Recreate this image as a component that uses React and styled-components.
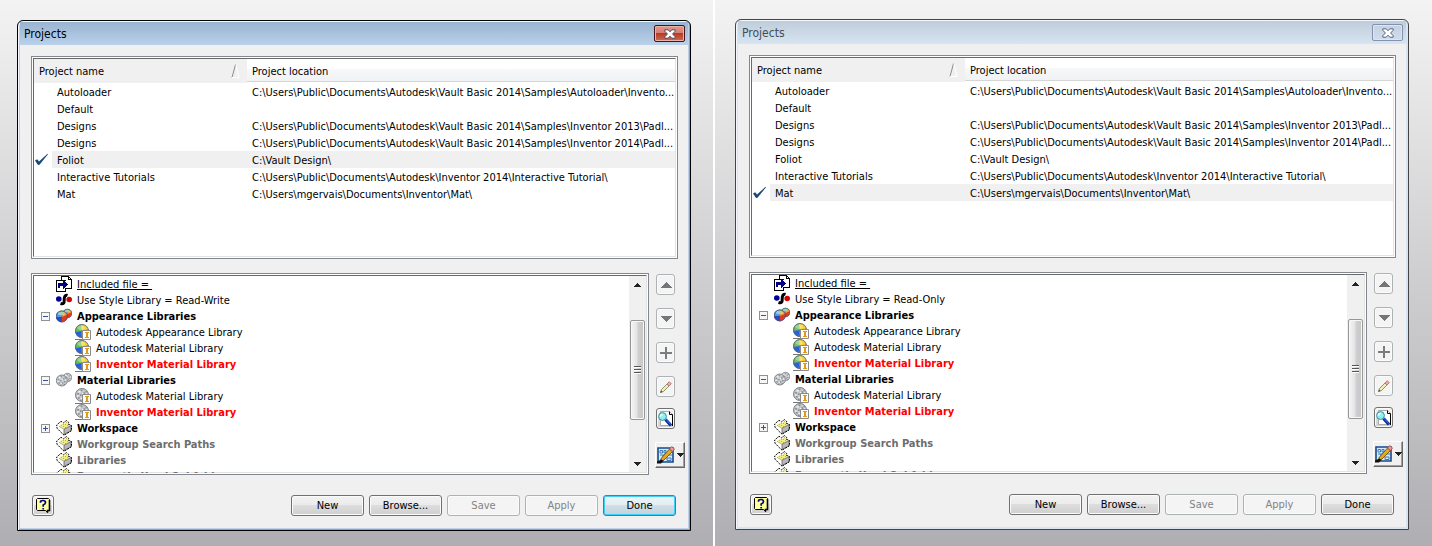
import React from 'react';
import styled, { createGlobalStyle, css } from 'styled-components';

const GlobalStyle = createGlobalStyle`
  * {
    box-sizing: border-box;
  }

  body {
    margin: 0;
    font-family: "DejaVu Sans Condensed", Tahoma, sans-serif;
    font-size: 11px;
    line-height: 16px;
    color: #000;
  }

  button {
    font: inherit;
    color: inherit;
    padding: 0;
  }

  svg {
    display: block;
  }
`;

// Data
const paths = [
  { name: 'Autoloader', location: 'C:\\Users\\Public\\Documents\\Autodesk\\Vault Basic 2014\\Samples\\Autoloader\\Invento...' },
  { name: 'Default', location: '' },
  { name: 'Designs', location: 'C:\\Users\\Public\\Documents\\Autodesk\\Vault Basic 2014\\Samples\\Inventor 2013\\Padl...' },
  { name: 'Designs', location: 'C:\\Users\\Public\\Documents\\Autodesk\\Vault Basic 2014\\Samples\\Inventor 2014\\Padl...' },
  { name: 'Foliot', location: 'C:\\Vault Design\\' },
  { name: 'Interactive Tutorials', location: 'C:\\Users\\Public\\Documents\\Autodesk\\Inventor 2014\\Interactive Tutorial\\' },
  { name: 'Mat', location: 'C:\\Users\\mgervais\\Documents\\Inventor\\Mat\\' },
];

const getTree = mode => [
  { icon: 'file', label: 'Included file = ', underline: true },
  { icon: 'style', label: `Use Style Library = ${mode}` },
  { icon: 'appearance', label: 'Appearance Libraries', bold: true, toggle: 'minus' },
  { icon: 'appearanceItem', label: 'Autodesk Appearance Library', child: true },
  { icon: 'appearanceItem', label: 'Autodesk Material Library', child: true },
  { icon: 'appearanceItem', label: 'Inventor Material Library', child: true, bold: true, color: '#ff0000' },
  { icon: 'material', label: 'Material Libraries', bold: true, toggle: 'minus' },
  { icon: 'materialItem', label: 'Autodesk Material Library', child: true },
  { icon: 'materialItem', label: 'Inventor Material Library', child: true, bold: true, color: '#ff0000' },
  { icon: 'box', label: 'Workspace', bold: true, toggle: 'plus' },
  { icon: 'box', label: 'Workgroup Search Paths', bold: true, color: '#6d6d6d' },
  { icon: 'box', label: 'Libraries', bold: true, color: '#6d6d6d' },
  { icon: 'box', label: 'Frequently Used Subfolders', bold: true, color: '#6d6d6d' },
];

// Icons
const FileIcon = () => (
  <svg width="16" height="16" viewBox="0 0 16 16" shapeRendering="crispEdges">
    <path d="M5.500 .5h7l3 3v9h-10z" fill="#fff" stroke="#000" />
    <path d="M12.500 .5v3h3" fill="none" stroke="#000" />
    <path d="M.5 4.500h9v11h-9z" fill="#fff" stroke="#000" />
    <path d="M9 5h2v7H9z" fill="#fff" />
    <path d="M2 7h5V4h1v1h1v1h1v1h1v1h1v1h-1v1h-1v1H9v1H8v1H7v-3H4v2H2z" fill="#000080" />
  </svg>
);

const StyleIcon = () => (
  <svg width="16" height="16" viewBox="0 0 16 16">
    <circle cx="2.800" cy="7" r="2.800" fill="#000099" />
    <circle cx="13.200" cy="7.500" r="2.800" fill="#d40000" />
    <path d="M4.500 11.500c3 1 3.800-.5 3.700-3.500s.8-5.500 3.300-4.500" fill="none" stroke="#000" strokeWidth="3" />
  </svg>
);

const Ball = ({ x, y, r, grey }) => (
  <g transform={`translate(${x} ${y}) scale(${r})`}>
    {grey ? (
      <>
        <circle r="1" fill="#c6c8cb" />
        <path d="M-.7-.3h.25v.25h-.25zM-.2-.8h.25v.25h-.25zM.2-.4h.25v.25H.2zM-.3-.1h.25v.25h-.25zM.4.1h.25v.25H.4zM-.6.3h.25v.25h-.25zM0 .3h.25v.25H0zM.3.6h.25v.2H.3zM-.3.7h.25v.2h-.25zM.5-.6h.2v.25H.5z" fill="#8d9299" />
        <path d="M-.5-.6h.3v.25h-.3zM0-.3h.2v.25H0zM.6-.25h.2v.25H.6zM-.75.05h.25v.2h-.25zM-.2.4H0v.2h-.2z" fill="#f4f4f4" />
      </>
    ) : (
      <>
        <circle r="1" fill="#f6d22c" />
        <path d="M0 0-.2-1A1 1 0 0 0-.98.1z" fill="#6cc050" />
        <path d="M0 0-.98.1A1 1 0 0 0-.2.98z" fill="#2464d8" />
        <path d="M0 0-.2.98A1 1 0 0 0 .8.6z" fill="#b33bb0" />
        <path d="M0 0 .8.600A1 1 0 0 0 .95-.3z" fill="#f7922a" />
        <ellipse cx="-.15" cy="-.5" rx=".55" ry=".35" fill="#fff" opacity=".35" />
      </>
    )}
    <circle r=".95" fill="none" stroke={grey ? '#777b80' : '#54688c'} strokeWidth=".14" />
  </g>
);

const SphereBall = ({ x, y, r }) => (
  <g transform={`translate(${x} ${y}) scale(${r})`}>
    <circle r="1" fill="#e03a24" />
    <path d="M0 .1-.3-1A1 1 0 0 0-1 .1z" fill="#4a9ae0" />
    <path d="M0 .1-1 .1A1 1 0 0 0 0 1z" fill="#2849c8" />
    <path d="M0 .1-.3-1A1 1 0 0 1 .5-.85z" fill="#5cb844" />
    <path d="M0 .1.500-.85A1 1 0 0 1 .95-.3z" fill="#f8a028" />
    <ellipse cx="-.1" cy="-.55" rx=".6" ry=".35" fill="#fff" opacity=".45" />
    <circle r=".95" fill="none" stroke="#3f548a" strokeWidth=".14" />
  </g>
);

const AppearanceIcon = () => (
  <svg width="16" height="16" viewBox="0 0 16 16">
    <SphereBall x={11.500} y={5.500} r={4.500} />
    <SphereBall x={5.800} y={8.500} r={5.800} />
  </svg>
);

const MaterialIcon = () => (
  <svg width="16" height="16" viewBox="0 0 16 16">
    <Ball x={11.500} y={5.500} r={4.500} grey />
    <Ball x={5.800} y={8.500} r={5.800} grey />
  </svg>
);

const LibraryItemIcon = ({ grey }) => (
  <svg width="16" height="16" viewBox="0 0 16 16">
    <Ball x={7} y={7} r={6.800} grey={grey} />
    <path d="M0 15.500h8" stroke="#777" />
    <path d="M7.500 6.500h8v9h-8z" fill="#fffdf5" stroke="#8a8a8a" />
    <path d="M10 8h4v1h-1v4h1v1h-4v-1h1V9h-1z" fill="#e09a1c" shapeRendering="crispEdges" />
  </svg>
);

const BoxIcon = () => (
  <svg width="16" height="16" viewBox="0 0 16 16">
    <path d="M1 5 5 1.500 7.500 3 10.500.800 12.500 2.500 11.500 4 15.300 5.500V10.500L8 15 4.500 11.500 1 8z" fill="#fffffa" />
    <path d="M3.500 5.500 6 3.800 7.500 4.500 10.500 2 12 3.500 11.500 4.500 14 5.500 8 8.800z" fill="#f4ee78" />
    <path d="M5 5h1v1H5zM7 6h1v1H7zM9 4h1v1H9zM11 5h1v1h-1zM9 7h1v1H9zM7 4h1v1H7zM10 2h1v1h-1z" fill="#c0b83c" />
    <path d="M8 9.200 15 5.500v5L8 14.700z" fill="#b8b8b8" stroke="#555" strokeWidth=".7" />
    <path d="M3 6.200 8 9.200" fill="none" stroke="#8a8a8a" strokeWidth=".7" />
    <path
      d="M8 15.200 4.500 11.800 1 8.200.7 5 5 1.300 7.500 2.800 10.500.600 12.700 2.500 12 4 15.500 5.500V10.700z"
      fill="none"
      stroke="#000"
      strokeWidth="1"
      strokeDasharray="2 1"
    />
  </svg>
);

const icons = {
  file: <FileIcon />,
  style: <StyleIcon />,
  appearance: <AppearanceIcon />,
  appearanceItem: <LibraryItemIcon />,
  material: <MaterialIcon />,
  materialItem: <LibraryItemIcon grey />,
  box: <BoxIcon />,
};

const CheckIcon = () => (
  <svg width="14" height="13" viewBox="0 0 14 13" role="img" aria-label="Active project">
    <path d="M0 7.500 2.200 6.200 4 8.500 12.500.800 13 1.200 4.500 11.800 3 12z" fill="#1b4878" />
  </svg>
);

const SortIcon = () => (
  <svg width="9" height="14" viewBox="0 0 9 14">
    <path d="M1 13.500 4.500.500" fill="none" stroke="#8c8c8c" />
    <path d="M5 .500 8 13.500H1" fill="none" stroke="#fff" />
  </svg>
);

const ToggleIcon = ({ plus }) => (
  <svg width="9" height="9" viewBox="0 0 9 9" shapeRendering="crispEdges">
    <path d="M.5.500h8v8h-8z" fill="#f6f6f6" stroke="#919191" />
    <path d={plus ? 'M2 4.500h5M4.500 2v5' : 'M2 4.500h5'} stroke="#3f4f9c" />
  </svg>
);

const CloseIcon = ({ active }) => (
  <svg width="12" height="10" viewBox="0 0 12 10">
    <path
      d="M.8.800h3.400L6 2.800 7.800.800h3.400v1.400L8.600 5l2.600 2.800v1.400H7.800L6 7.200 4.200 9.200H.8V7.800L3.400 5 .8 2.200z"
      fill="#fff"
      stroke={active ? '#4d4a5c' : '#5a6482'}
    />
  </svg>
);

const UpIcon = () => (
  <svg width="12" height="6" viewBox="0 0 12 6" shapeRendering="crispEdges">
    <path d="M0 6 6 0l6 6z" fill="#767676" />
  </svg>
);

const DownIcon = () => (
  <svg width="12" height="6" viewBox="0 0 12 6" shapeRendering="crispEdges">
    <path d="M0 0 6 6l6-6z" fill="#767676" />
  </svg>
);

const PlusIcon = () => (
  <svg width="12" height="12" viewBox="0 0 12 12" shapeRendering="crispEdges">
    <path d="M5 0h2v5h5v2H7v5H5V7H0V5h5z" fill="#7c7c7c" />
  </svg>
);

const PencilIcon = () => (
  <svg width="12" height="12" viewBox="0 0 12 12">
    <path d="M.5 11.500 1.500 8.500 7 3l2 2-5.500 5.500z" fill="#f2efae" stroke="#77775e" strokeWidth=".8" />
    <path d="M7 3 9.300.700l2 2L9 5z" fill="#f3a9a9" stroke="#b06868" strokeWidth=".8" />
    <path d="M.3 11.700 1 9.500 2.500 11z" fill="#444" />
  </svg>
);

const FindIcon = () => (
  <svg width="17" height="17" viewBox="0 0 17 17">
    <path d="M3.500 1.500h9l3 3v11h-12z" fill="#fff" stroke="#aaa" />
    <path d="M12.500 1.500v3h3v11.500" fill="none" stroke="#000" />
    <path d="M8.500 9.500 14 15.500" stroke="#0a2a9c" strokeWidth="3.200" />
    <path d="M9 9.300 13.700 14.500" stroke="#3f7df0" strokeWidth="1" />
    <circle cx="5.500" cy="6.500" r="3.900" fill="#8ff0f2" stroke="#3a8f98" />
    <path d="M3.500 6.500a2 2 0 0 1 2-2" fill="none" stroke="#fff" strokeWidth="1.300" />
  </svg>
);

const SettingsIcon = () => (
  <svg width="18" height="18" viewBox="0 0 18 18">
    <path d="M1 2h15v14H1z" fill="#d3eafc" stroke="#16498a" strokeWidth="1.600" />
    <path d="M3 4.500h2.500v2.500H3zM7 4.500h2v2.500H7zM3 9h12M6 9v6M10 12h4v2.500h-4z" fill="none" stroke="#3f78b8" />
    <path d="M2.500 16.500 4.500 12 12.500 3 15.500 5.500 7 14z" fill="#e6a91c" stroke="#5c420c" strokeWidth=".8" />
    <path d="M12.500 3 14.700.600l2.800 2.300L15.500 5.500z" fill="#f09a98" stroke="#a04444" strokeWidth=".8" />
    <path d="M0 17.500v-2l4.500-2 2 1.500-2.500 2.500z" fill="#111" />
  </svg>
);

const HelpIcon = () => (
  <svg width="15" height="15" viewBox="0 0 15 15">
    <path d="M1.500.500h11l1 1v11h-2v2l-2-2h-8l-1-1v-10z" fill="#ffff9c" stroke="#000" />
    <path d="M13.500 2v10.500H11.500v2" fill="none" stroke="#000" strokeWidth="1.600" />
    <path d="M4.500 4.800V4Q4.500 2.500 7 2.500t2.500 2Q9.500 6 7.200 7v1.800M7.200 10v1.600" fill="none" stroke="#00007c" strokeWidth="1.700" />
  </svg>
);

const CaretIcon = ({ up }) => (
  <svg width="7" height="4" viewBox="0 0 7 4" shapeRendering="crispEdges">
    <path d={up ? 'M0 4 3.500 0 7 4z' : 'M0 0l3.500 4L7 0z'} fill="#222" />
  </svg>
);

const GripIcon = () => (
  <svg width="7" height="8" viewBox="0 0 7 8" shapeRendering="crispEdges">
    <path d="M0 .5h7M0 3.500h7M0 6.500h7" stroke="#555" />
    <path d="M0 1.500h7M0 4.500h7M0 7.500h7" stroke="#fff" />
  </svg>
);

const ProjectsDialog = ({ active, selected, mode }) => (
  <Dialog $active={active} role="dialog" aria-label="Projects">
    <TitleBar $active={active}>
      <Title>Projects</Title>
      <CloseButton $active={active} aria-label="Close">
        <CloseIcon active={active} />
      </CloseButton>
    </TitleBar>

    <Body>
      <ListBox>
        <ListInner>
          <Table>
            <colgroup>
              <CheckCol />
              <NameCol />
              <col />
            </colgroup>
            <thead>
              <tr>
                <NameHeader colSpan={2}>
                  <HeaderContent>
                    Project name
                    <SortIcon />
                  </HeaderContent>
                </NameHeader>
                <LocationHeader>Project location</LocationHeader>
              </tr>
            </thead>
            <tbody>
              {paths.map((project, index) => (
                <tr key={index}>
                  <CheckCell>{index === selected && <CheckIcon />}</CheckCell>
                  <Cell $selected={index === selected}>{project.name}</Cell>
                  <Cell $selected={index === selected}>{project.location}</Cell>
                </tr>
              ))}
            </tbody>
          </Table>
        </ListInner>
      </ListBox>

      <Middle>
        <TreeBox>
          <TreeInner>
            <Tree>
              {getTree(mode).map((node, index) => (
                <TreeRow key={index} $child={node.child}>
                  <Toggle>
                    {node.toggle && <ToggleIcon plus={node.toggle === 'plus'} />}
                  </Toggle>
                  {icons[node.icon]}
                  <Label $bold={node.bold} $color={node.color} $underline={node.underline}>
                    {node.label}
                  </Label>
                </TreeRow>
              ))}
            </Tree>
            <ScrollBar>
              <ScrollButton aria-label="Scroll up"><CaretIcon up /></ScrollButton>
              <Track>
                <Thumb><GripIcon /></Thumb>
              </Track>
              <ScrollButton aria-label="Scroll down"><CaretIcon /></ScrollButton>
            </ScrollBar>
          </TreeInner>
        </TreeBox>

        <Tools>
          <ToolGroup>
            <ToolButton disabled aria-label="Move up"><UpIcon /></ToolButton>
            <ToolButton disabled aria-label="Move down"><DownIcon /></ToolButton>
            <ToolButton disabled aria-label="Add"><PlusIcon /></ToolButton>
            <ToolButton disabled aria-label="Edit"><PencilIcon /></ToolButton>
          </ToolGroup>
          <ToolGroup>
            <ToolButton aria-label="Find"><FindIcon /></ToolButton>
            <MenuButton aria-label="Settings">
              <SettingsIcon />
              <CaretIcon />
            </MenuButton>
          </ToolGroup>
        </Tools>
      </Middle>

      <Footer>
        <HelpButton aria-label="Help"><HelpIcon /></HelpButton>
        <ButtonGroup>
          <Button>New</Button>
          <Button>Browse...</Button>
          <Button disabled>Save</Button>
          <Button disabled>Apply</Button>
          <Button $primary={active}>Done</Button>
        </ButtonGroup>
      </Footer>
    </Body>
  </Dialog>
);

const App = () => (
  <>
    <GlobalStyle />
    <Page>
      <LeftPane>
        <ProjectsDialog active selected={4} mode="Read-Write" />
      </LeftPane>
      <RightPane>
        <ProjectsDialog selected={6} mode="Read-Only" />
      </RightPane>
    </Page>
  </>
);

// Styled Components
const Page = styled.main`
  display: grid;
  grid-template-columns: 713fr 717fr;
  column-gap: 2px;
  min-height: 100vh;
  background: #fff;
`;

const Pane = styled.section`
  min-width: 0;
  background: linear-gradient(#f3f3f3 0%, #e3e3e4 22%, #cfcfd1 50%, #bbbbbe 82%, #afafb3 100%);
`;

const LeftPane = styled(Pane)`
  padding: 20px 22px 15px 17px;
`;

const RightPane = styled(Pane)`
  padding: 19px 23px 16px 20px;
`;

const Dialog = styled.div`
  padding: 1px 2px 2px;
  border: 1px solid ${props => (props.$active ? '#000' : '#444')};
  border-radius: 6px 6px 0 0;
  background: ${props => (props.$active ? '#b9d1ea' : '#d7e4f2')};
  box-shadow: ${props => (props.$active
    ? 'inset 1px 1px 0 #f4f8fc, inset -1px -1px 0 #3cc4ee'
    : 'inset 1px 1px 0 #f4f8fc')};
`;

const TitleBar = styled.header`
  display: flex;
  align-items: center;
  justify-content: space-between;
  height: 23px;
  padding: 0 3px 0 4px;
  color: ${props => (props.$active ? '#000' : '#434e54')};
  background: ${props => (props.$active
    ? 'linear-gradient(#99b4d1, #b9d1ea)'
    : 'linear-gradient(#bfcddb, #d7e4f2)')};
`;

const Title = styled.h1`
  margin: 0;
  font-size: 12px;
  font-weight: 400;
`;

const CloseButton = styled.button`
  display: flex;
  align-items: center;
  justify-content: center;
  width: 31px;
  height: 17px;
  border: 1px solid ${props => (props.$active ? '#43141c' : '#8390ae')};
  border-radius: 2px;
  box-shadow: inset 0 0 0 1px ${props => (props.$active ? '#e9b3a8' : '#dce6f2')};
  background: ${props => (props.$active
    ? 'linear-gradient(#e2958a 0%, #d98072 45%, #b83a26 50%, #cf6a50 100%)'
    : 'linear-gradient(#c3d1e1, #d0ddec)')};
`;

const Body = styled.div`
  padding: 11px 0 12px;
  background: #f0f0f0;
`;

const sunken = css`
  padding: 1px;
  border: 1px solid #828790;
  background: #fff;
`;

const sunkenInner = css`
  border: 1px solid;
  border-color: #69696b #e3e3e3 #e3e3e3 #69696b;
`;

const ListBox = styled.div`
  ${sunken}
  margin: 0 10px 14px 11px;
`;

const ListInner = styled.div`
  ${sunkenInner}
  min-height: 199px;
`;

const Table = styled.table`
  width: 100%;
  table-layout: fixed;
  border-collapse: collapse;
  white-space: nowrap;
`;

const CheckCol = styled.col`
  width: 18px;
`;

const NameCol = styled.col`
  width: 195px;
`;

const HeaderCell = styled.th`
  height: 24px;
  padding: 0 5px;
  font-weight: 400;
  line-height: 17px;
  text-align: left;
`;

const NameHeader = styled(HeaderCell)`
  padding-right: 7px;
  background: #f0f0f0;
`;

const LocationHeader = styled(HeaderCell)`
  background: linear-gradient(#fff 0 40%, #f7f8fa 41%, #f1f2f4 90%, #d5d5d5 91% 95%, #fff 96%);
`;

const HeaderContent = styled.div`
  display: flex;
  align-items: center;
  justify-content: space-between;
`;

const Cell = styled.td`
  height: 17px;
  padding: 2px 0 0 5px;
  overflow: hidden;
  line-height: 15px;
  background: ${props => (props.$selected ? '#f0f0f0' : 'transparent')};
`;

const CheckCell = styled.td`
  height: 17px;
  padding: 0 0 0 1px;
`;

const Middle = styled.div`
  display: flex;
  gap: 6px;
  padding: 0 3px 0 11px;
`;

const TreeBox = styled.div`
  ${sunken}
  flex: 1;
  min-width: 0;
`;

const TreeInner = styled.div`
  ${sunkenInner}
  display: flex;
  height: 198px;
`;

const Tree = styled.ul`
  flex: 1;
  min-width: 0;
  margin: 0 0 -1px;
  padding: 0;
  overflow: hidden;
  list-style: none;
`;

const TreeRow = styled.li`
  display: flex;
  align-items: center;
  height: 16px;
  padding-left: ${props => (props.$child ? 26 : 7)}px;
  white-space: pre;
`;

const Toggle = styled.span`
  width: 15px;
  flex: none;
`;

const Label = styled.span`
  margin-left: 5px;
  padding-top: 2px;
  font-weight: ${props => (props.$bold ? 700 : 400)};
  color: ${props => props.$color || '#000'};
  text-decoration: ${props => (props.$underline ? 'underline' : 'none')};
`;

const ScrollBar = styled.div`
  display: flex;
  flex-direction: column;
  width: 17px;
  background: #f0f0f0;
`;

const ScrollButton = styled.button`
  display: flex;
  align-items: center;
  justify-content: center;
  height: 17px;
  border: 0;
  background: transparent;
`;

const Track = styled.div`
  flex: 1;
  padding: 27px 1px 0;
`;

const Thumb = styled.div`
  display: flex;
  align-items: center;
  justify-content: center;
  height: 100px;
  border: 1px solid #979797;
  border-radius: 2px;
  background: linear-gradient(to right, #f5f5f5, #e4e4e6 45%, #cfcfd1 55%, #c6c6c8);
  box-shadow: inset 0 0 0 1px #f8f8f8;
`;

const Tools = styled.div`
  display: flex;
  flex-direction: column;
  gap: 11px;
  width: 30px;
  padding-top: 1px;
`;

const ToolGroup = styled.div`
  display: flex;
  flex-direction: column;
  gap: 13px;
`;

const buttonFace = css`
  display: flex;
  align-items: center;
  justify-content: center;
  height: 21px;
  border: 1px solid #707070;
  border-radius: 3px;
  background: linear-gradient(#f2f2f2 0%, #ebebeb 49%, #dddddd 50%, #cfcfcf 100%);
  box-shadow: inset 0 0 0 1px #fbfbfb;

  &:disabled {
    border-color: #adb2b5;
    color: #838383;
    background: #f4f4f4;
  }
`;

const ToolButton = styled.button`
  ${buttonFace}
  width: 19px;
  margin-left: 1px;
`;

const MenuButton = styled.button`
  display: flex;
  align-items: center;
  gap: 2px;
  height: 26px;
  padding-left: 1px;
  border: 1px solid;
  border-color: #fff #696969 #696969 #fff;
  background: #f0f0f0;
  box-shadow: inset -1px -1px 0 #a0a0a0;
`;

const Footer = styled.footer`
  display: flex;
  justify-content: space-between;
  padding: 20px 12px 0;
`;

const ButtonGroup = styled.div`
  display: flex;
  gap: 5px;
`;

const Button = styled.button`
  ${buttonFace}
  width: 73px;
  ${props => props.$primary && css`
    border-color: #3c7fb1;
    background: linear-gradient(#eef4f7 0%, #e2edf2 49%, #cfdfe8 50%, #bfd3de 100%);
    box-shadow: inset 0 0 0 1px #3fd0f8;
  `}
`;

const HelpButton = styled.button`
  ${buttonFace}
  width: 22px;
`;

export default App;
